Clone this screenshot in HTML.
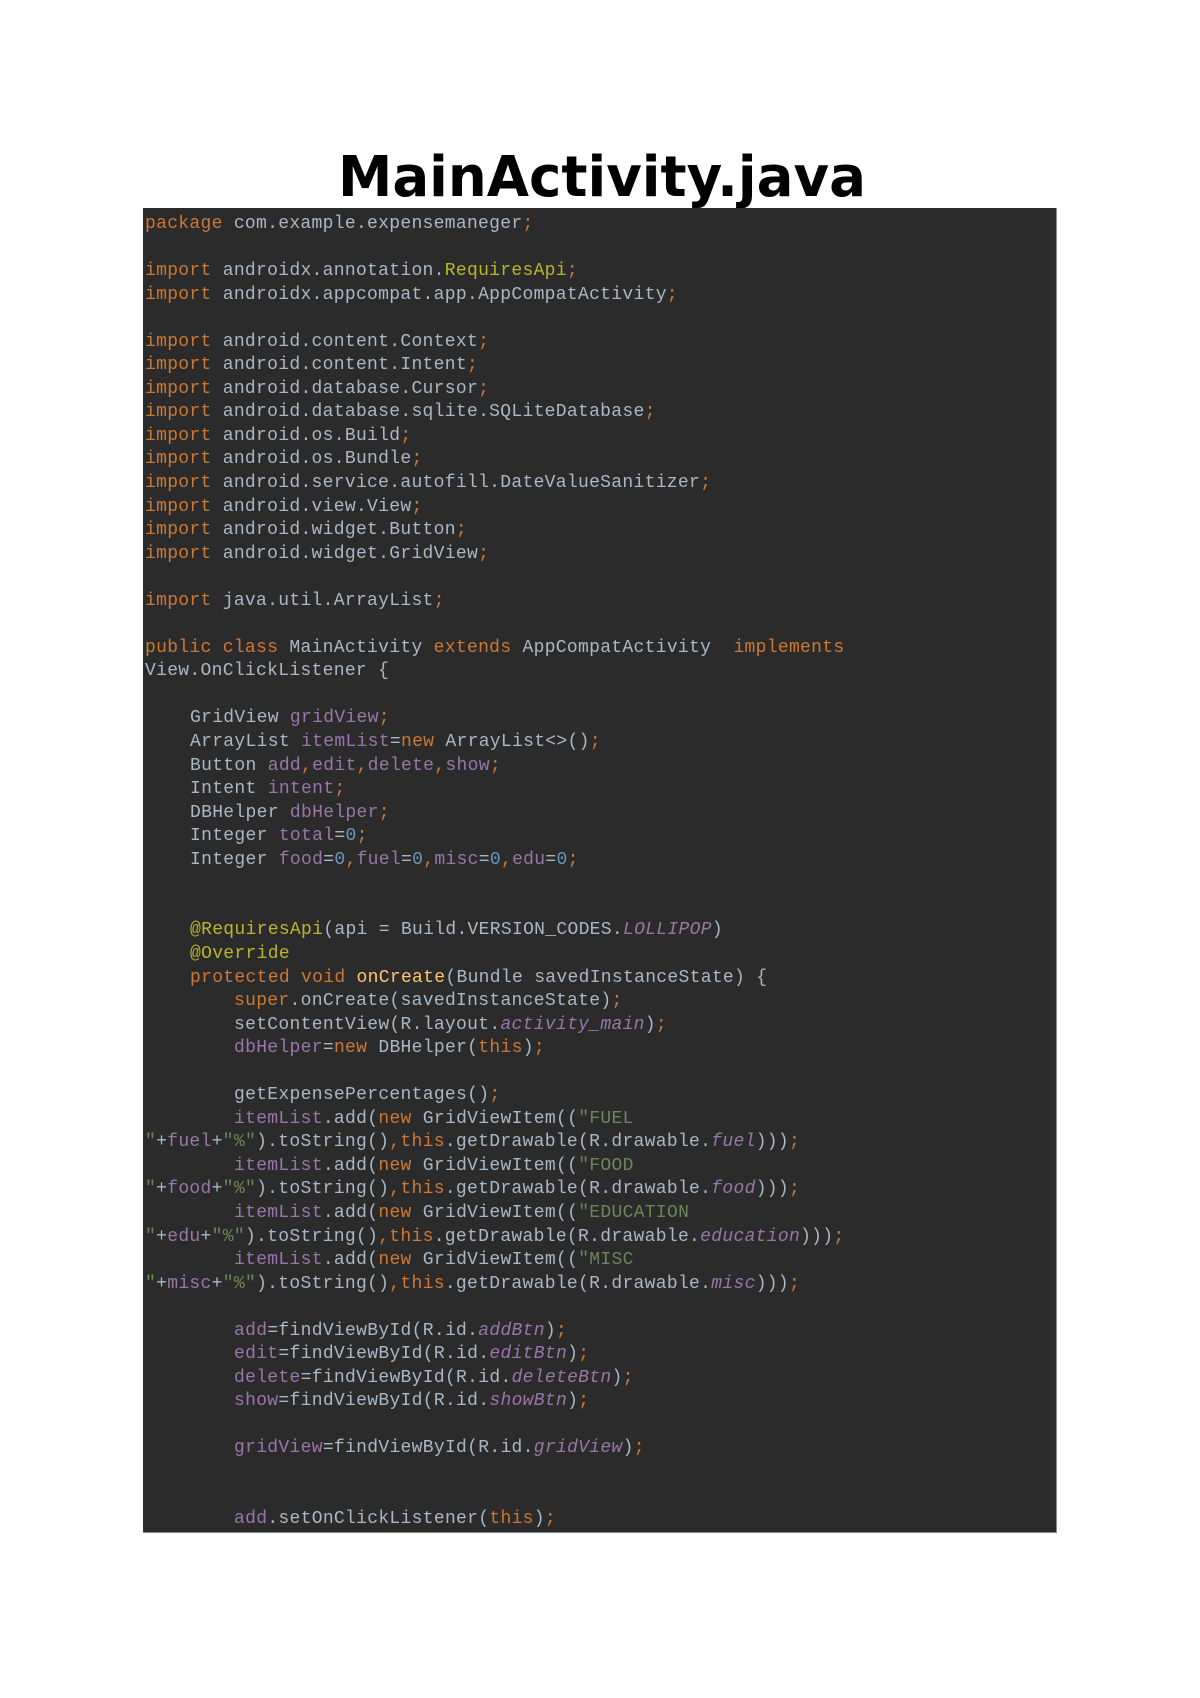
<!DOCTYPE html>
<html><head><meta charset="utf-8"><style>
html,body{margin:0;padding:0;background:#fff;width:1200px;height:1698px;overflow:hidden;position:relative}
.t{position:absolute;left:338px;top:143px;font-family:"DejaVu Sans",sans-serif;font-weight:bold;font-size:56px;line-height:70px;color:#000;transform:scaleX(0.975);transform-origin:0 0;white-space:nowrap}
.box{position:absolute;left:143px;top:208px;width:913px;height:1324px;background:#2b2b2b;border-right:1px solid #888;border-bottom:1px solid #888}
.code{position:absolute;left:145px;top:213px;font-family:"Liberation Mono",monospace;font-size:18px;letter-spacing:0.3px;color:#a9b7c6}
.code div{height:23.55px;line-height:23.55px;white-space:pre}
.i1{padding-left:45px}.i2{padding-left:89px}
.k{color:#cc7832}.p{color:#9876aa}.pi{color:#9876aa;font-style:italic}.s{color:#6a8759}.n{color:#6897bb}.a{color:#bbb529}.f{color:#ffc66d}
</style></head><body>
<div class="t">MainActivity.java</div>
<div class="box"></div>
<div class="code"><div><span class="k">package</span> com.example.expensemaneger<span class="k">;</span></div><div></div><div><span class="k">import</span> androidx.annotation.<span class="a">RequiresApi</span><span class="k">;</span></div><div><span class="k">import</span> androidx.appcompat.app.AppCompatActivity<span class="k">;</span></div><div></div><div><span class="k">import</span> android.content.Context<span class="k">;</span></div><div><span class="k">import</span> android.content.Intent<span class="k">;</span></div><div><span class="k">import</span> android.database.Cursor<span class="k">;</span></div><div><span class="k">import</span> android.database.sqlite.SQLiteDatabase<span class="k">;</span></div><div><span class="k">import</span> android.os.Build<span class="k">;</span></div><div><span class="k">import</span> android.os.Bundle<span class="k">;</span></div><div><span class="k">import</span> android.service.autofill.DateValueSanitizer<span class="k">;</span></div><div><span class="k">import</span> android.view.View<span class="k">;</span></div><div><span class="k">import</span> android.widget.Button<span class="k">;</span></div><div><span class="k">import</span> android.widget.GridView<span class="k">;</span></div><div></div><div><span class="k">import</span> java.util.ArrayList<span class="k">;</span></div><div></div><div><span class="k">public class</span> MainActivity <span class="k">extends</span> AppCompatActivity  <span class="k">implements</span></div><div>View.OnClickListener {</div><div></div><div class="i1">GridView <span class="p">gridView</span><span class="k">;</span></div><div class="i1">ArrayList <span class="p">itemList</span>=<span class="k">new</span> ArrayList&lt;&gt;()<span class="k">;</span></div><div class="i1">Button <span class="p">add</span><span class="k">,</span><span class="p">edit</span><span class="k">,</span><span class="p">delete</span><span class="k">,</span><span class="p">show</span><span class="k">;</span></div><div class="i1">Intent <span class="p">intent</span><span class="k">;</span></div><div class="i1">DBHelper <span class="p">dbHelper</span><span class="k">;</span></div><div class="i1">Integer <span class="p">total</span>=<span class="n">0</span><span class="k">;</span></div><div class="i1">Integer <span class="p">food</span>=<span class="n">0</span><span class="k">,</span><span class="p">fuel</span>=<span class="n">0</span><span class="k">,</span><span class="p">misc</span>=<span class="n">0</span><span class="k">,</span><span class="p">edu</span>=<span class="n">0</span><span class="k">;</span></div><div></div><div></div><div class="i1"><span class="a">@RequiresApi</span>(api = Build.VERSION_CODES.<span class="pi">LOLLIPOP</span>)</div><div class="i1"><span class="a">@Override</span></div><div class="i1"><span class="k">protected void</span> <span class="f">onCreate</span>(Bundle savedInstanceState) {</div><div class="i2"><span class="k">super</span>.onCreate(savedInstanceState)<span class="k">;</span></div><div class="i2">setContentView(R.layout.<span class="pi">activity_main</span>)<span class="k">;</span></div><div class="i2"><span class="p">dbHelper</span>=<span class="k">new</span> DBHelper(<span class="k">this</span>)<span class="k">;</span></div><div></div><div class="i2">getExpensePercentages()<span class="k">;</span></div><div class="i2"><span class="p">itemList</span>.add(<span class="k">new</span> GridViewItem((<span class="s">"FUEL</span></div><div><span class="s">"</span>+<span class="p">fuel</span>+<span class="s">"%"</span>).toString()<span class="k">,this</span>.getDrawable(R.drawable.<span class="pi">fuel</span>)))<span class="k">;</span></div><div class="i2"><span class="p">itemList</span>.add(<span class="k">new</span> GridViewItem((<span class="s">"FOOD</span></div><div><span class="s">"</span>+<span class="p">food</span>+<span class="s">"%"</span>).toString()<span class="k">,this</span>.getDrawable(R.drawable.<span class="pi">food</span>)))<span class="k">;</span></div><div class="i2"><span class="p">itemList</span>.add(<span class="k">new</span> GridViewItem((<span class="s">"EDUCATION</span></div><div><span class="s">"</span>+<span class="p">edu</span>+<span class="s">"%"</span>).toString()<span class="k">,this</span>.getDrawable(R.drawable.<span class="pi">education</span>)))<span class="k">;</span></div><div class="i2"><span class="p">itemList</span>.add(<span class="k">new</span> GridViewItem((<span class="s">"MISC</span></div><div><span class="s">"</span>+<span class="p">misc</span>+<span class="s">"%"</span>).toString()<span class="k">,this</span>.getDrawable(R.drawable.<span class="pi">misc</span>)))<span class="k">;</span></div><div></div><div class="i2"><span class="p">add</span>=findViewById(R.id.<span class="pi">addBtn</span>)<span class="k">;</span></div><div class="i2"><span class="p">edit</span>=findViewById(R.id.<span class="pi">editBtn</span>)<span class="k">;</span></div><div class="i2"><span class="p">delete</span>=findViewById(R.id.<span class="pi">deleteBtn</span>)<span class="k">;</span></div><div class="i2"><span class="p">show</span>=findViewById(R.id.<span class="pi">showBtn</span>)<span class="k">;</span></div><div></div><div class="i2"><span class="p">gridView</span>=findViewById(R.id.<span class="pi">gridView</span>)<span class="k">;</span></div><div></div><div></div><div class="i2"><span class="p">add</span>.setOnClickListener(<span class="k">this</span>)<span class="k">;</span></div></div>
</body></html>
